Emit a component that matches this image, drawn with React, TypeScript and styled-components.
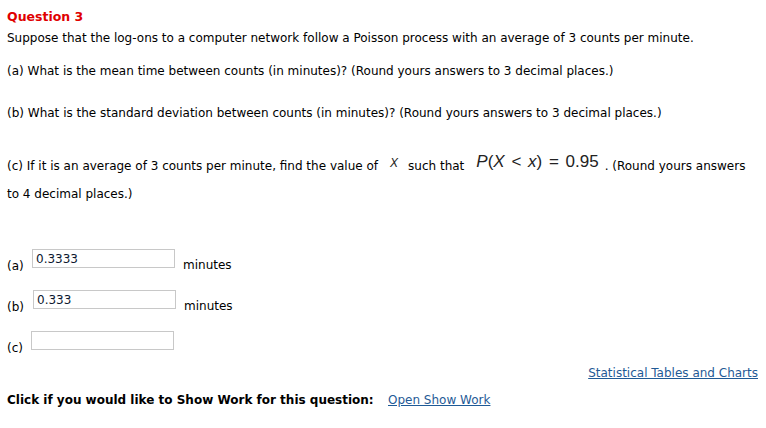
import React from 'react'
import styled, { createGlobalStyle } from 'styled-components'

const GlobalStyle = createGlobalStyle`
  html, body {
    margin: 0;
    padding: 0;
    background: #fff;
  }
  body {
    font-family: "DejaVu Sans", Verdana, sans-serif;
    font-size: 12px;
    color: #000;
  }
`

const Page = styled.div`
  width: 766px;
  height: 428px;
  padding: 9px 8px 0 7px;
  box-sizing: border-box;
  overflow: hidden;
`

const Title = styled.div`
  color: #e00000;
  font-weight: bold;
  font-size: 12.5px;
  line-height: 15px;
`

const Para = styled.p<{ $top: number }>`
  margin: ${p => p.$top}px 0 0;
  line-height: 16px;
`

const Math = styled.span<{ $size?: number; $l: number; $r: number }>`
  font-family: "Liberation Sans", Arial, sans-serif;
  font-size: ${p => p.$size ?? 17}px;
  line-height: 10px;
  color: #222;
  vertical-align: 3px;
  margin: 0 ${p => p.$r}px 0 ${p => p.$l}px;
  word-spacing: 2px;
`

const Var = styled.i`
  font-style: italic;
`

const Answers = styled.div`
  margin-top: 46px;
  display: flex;
  flex-direction: column;
  gap: 21px;
`

const Row = styled.div`
  display: flex;
  align-items: flex-end;
  height: 20px;
`

const Label = styled.span<{ $w: number }>`
  width: ${p => p.$w}px;
  line-height: 14px;
  margin-bottom: -5px;
`

const Field = styled.input`
  width: 143px;
  height: 19px;
  box-sizing: border-box;
  border: 1px solid #c8c8c8;
  padding: 0 3px;
  font-family: "DejaVu Sans", Verdana, sans-serif;
  font-size: 12px;
  color: #0c1830;
  outline: none;
`

const Unit = styled.span`
  margin-left: 8px;
  line-height: 14px;
  margin-bottom: -4px;
`

const Links = styled.div`
  margin-top: 16px;
  text-align: right;
`

const Link = styled.a`
  color: #1f5a96;
  text-decoration: underline;
  cursor: pointer;
`

const Footer = styled.div`
  margin-top: 13px;
  display: flex;
  align-items: baseline;
`

const Prompt = styled.b`
  font-weight: bold;
  width: 381px;
`

export default function App() {
  return (
    <>
      <GlobalStyle />
      <Page>
        <Title>Question 3</Title>
        <Para $top={6}>
          Suppose that the log-ons to a computer network follow a Poisson process with an average of 3 counts per minute.
        </Para>
        <Para $top={17}>
          (a) What is the mean time between counts (in minutes)? (Round yours answers to 3 decimal places.)
        </Para>
        <Para $top={26}>
          (b) What is the standard deviation between counts (in minutes)? (Round yours answers to 3 decimal places.)
        </Para>
        <Para $top={36}>
          (c) If it is an average of 3 counts per minute, find the value of
          <Math $size={12} $l={12} $r={10}><Var>X</Var></Math>
          such that
          <Math $l={12} $r={6}>
            <Var>P</Var>(<Var>X</Var> &lt; <Var>x</Var>) = 0.95
          </Math>
          . (Round yours answers
        </Para>
        <Para $top={12}>to 4 decimal places.)</Para>
        <Answers>
          <Row>
            <Label $w={25}>(a)</Label>
            <Field defaultValue="0.3333" />
            <Unit>minutes</Unit>
          </Row>
          <Row>
            <Label $w={26}>(b)</Label>
            <Field defaultValue="0.333" />
            <Unit>minutes</Unit>
          </Row>
          <Row>
            <Label $w={24}>(c)</Label>
            <Field />
          </Row>
        </Answers>
        <Links>
          <Link>Statistical Tables and Charts</Link>
        </Links>
        <Footer>
          <Prompt>Click if you would like to Show Work for this question:</Prompt>
          <Link>Open Show Work</Link>
        </Footer>
      </Page>
    </>
  )
}
